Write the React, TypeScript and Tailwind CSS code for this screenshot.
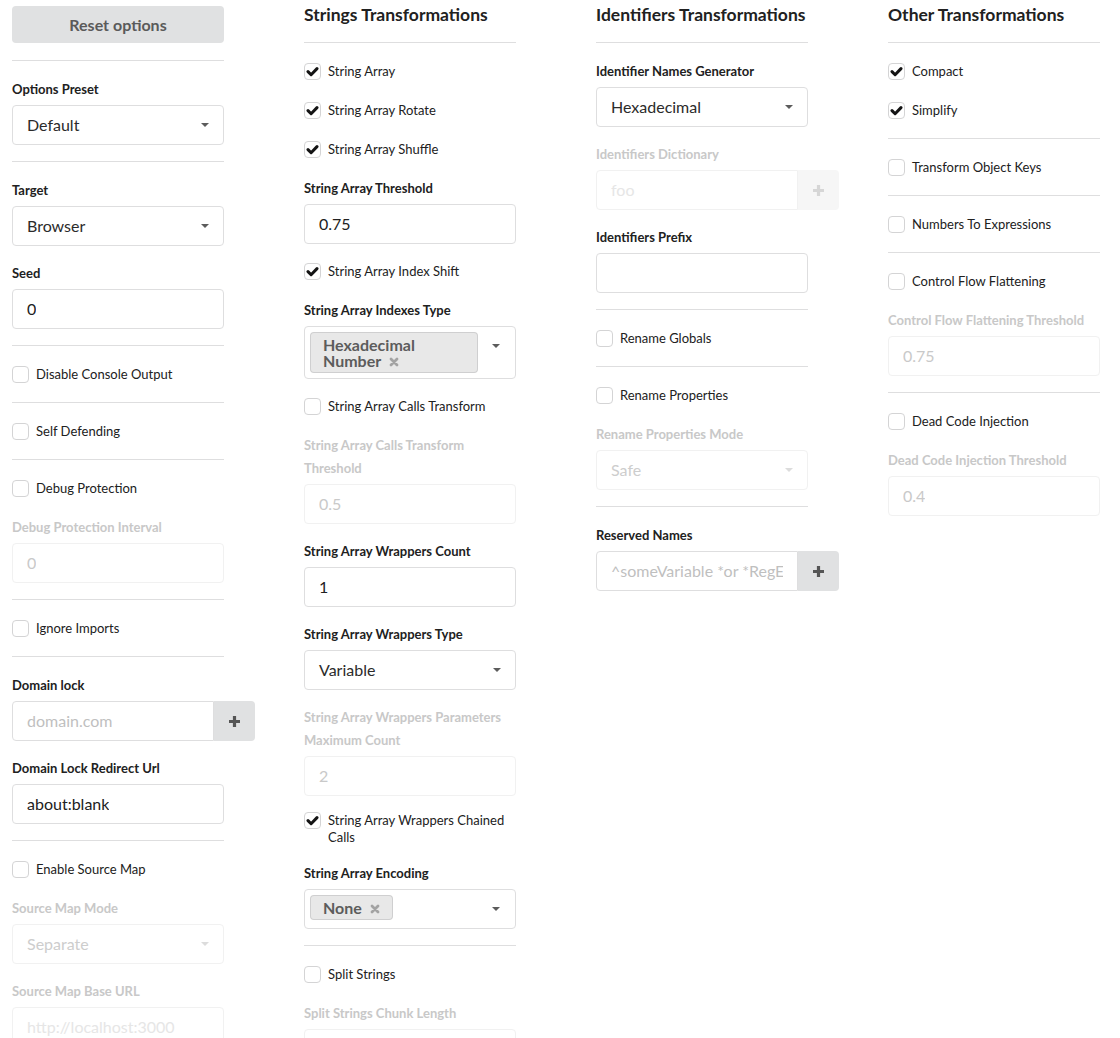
import type { ReactNode } from 'react'

const Check = () => (
  <svg width="13" height="13" viewBox="0 0 13 13">
    <path d="M2 6.6 L5.1 9.7 L11 3.6" fill="none" stroke="#141414" strokeWidth="3" strokeLinecap="round" strokeLinejoin="round" />
  </svg>
)

const Caret = ({ light }: { light?: boolean }) => (
  <svg width="8" height="4" viewBox="0 0 8 4" className="shrink-0">
    <path d="M0 0 H8 L4 4 Z" fill={light ? '#dcdcdc' : '#5c5c5c'} />
  </svg>
)

const Plus = ({ light }: { light?: boolean }) => (
  <svg width="13" height="13" viewBox="0 0 13 13">
    <path d="M6.5 1 V12 M1 6.5 H12" stroke={light ? '#d6d6d6' : '#555'} strokeWidth="3.2" />
  </svg>
)

const Cross = () => (
  <svg width="10" height="10" viewBox="0 0 10 10" className="ml-[8px] inline-block align-[0px]">
    <path d="M2 2 L8 8 M8 2 L2 8" stroke="#a3a3a3" strokeWidth="2.8" strokeLinecap="round" />
  </svg>
)

function Divider() {
  return <div className="h-px bg-[#dededf]" />
}

function Section({ children }: { children: ReactNode }) {
  return <div className="flex flex-col gap-[16px] pt-[17px] pb-[16px]">{children}</div>
}

function Header({ children }: { children: ReactNode }) {
  return <h3 className="mb-[12px] text-[17.5px] leading-[30px] font-bold text-[#212121]">{children}</h3>
}

function Field({ label, disabled, children }: { label: string; disabled?: boolean; children: ReactNode }) {
  return (
    <div>
      <div className={`mb-[4px] text-[13px] leading-[23px] font-bold ${disabled ? 'text-[#c8c8c8]' : 'text-[#212121]'}`}>
        {label}
      </div>
      {children}
    </div>
  )
}

function Checkbox({ label, checked, multiline }: { label: string; checked?: boolean; multiline?: boolean }) {
  return (
    <div className={`flex items-start text-[13px] leading-[17px] text-[#212121] ${multiline ? '' : 'py-[3px]'}`}>
      <span className="flex h-[17px] w-[17px] shrink-0 items-center justify-center rounded-[4px] border border-[#d4d4d5] bg-white">
        {checked && <Check />}
      </span>
      <span className="ml-[7px]">{label}</span>
    </div>
  )
}

function Input({ value, placeholder, disabled }: { value?: string; placeholder?: string; disabled?: boolean }) {
  const color = value
    ? disabled ? 'text-[#c9c9c9]' : 'text-[#212121]'
    : disabled ? 'text-[#e6e6e6]' : 'text-[#bfbfbf]'
  return (
    <div
      className={`flex h-[40px] items-center rounded-[4px] border px-[14px] text-[16px] ${
        disabled ? 'border-[#f1f1f1]' : 'border-[#dededf]'
      } ${color}`}
    >
      <span className="block overflow-hidden whitespace-nowrap">{value ?? placeholder}</span>
    </div>
  )
}

function Select({ value, disabled }: { value: string; disabled?: boolean }) {
  return (
    <div
      className={`flex h-[40px] items-center justify-between rounded-[4px] border pr-[14px] pl-[14px] text-[16px] ${
        disabled ? 'border-[#f1f1f1] text-[#cdcdcd]' : 'border-[#dededf] text-[#2b2b2b]'
      }`}
    >
      <span>{value}</span>
      <Caret light={disabled} />
    </div>
  )
}

function MultiSelect({ value }: { value: string }) {
  return (
    <div className="flex min-h-[40px] items-start rounded-[4px] border border-[#dededf] py-[5px] pr-[15px] pl-[5px]">
      <div className="mr-[14px] flex-1">
        <span className="inline-block rounded-[4px] bg-[#e8e8e8] px-[13px] py-[4.5px] text-[16px] leading-[16px] font-bold text-[#5c5c5c] shadow-[inset_0_0_0_1px_rgba(34,36,38,0.12)]">
          {value}
          <Cross />
        </span>
      </div>
      <div className="mt-[12px]">
        <Caret />
      </div>
    </div>
  )
}

function ActionInput({ placeholder, disabled }: { placeholder: string; disabled?: boolean }) {
  return (
    <div className="flex h-[40px] w-[243px]">
      <div
        className={`flex min-w-0 flex-1 items-center rounded-l-[4px] border px-[14px] text-[16px] ${
          disabled ? 'border-[#f1f1f1] text-[#e6e6e6]' : 'border-[#dededf] text-[#bfbfbf]'
        }`}
      >
        <span className="block overflow-hidden whitespace-nowrap">{placeholder}</span>
      </div>
      <div
        className={`flex w-[41px] shrink-0 items-center justify-center rounded-r-[4px] ${
          disabled ? 'bg-[#f6f6f6]' : 'bg-[#e0e1e2]'
        }`}
      >
        <Plus light={disabled} />
      </div>
    </div>
  )
}

function Column({ children }: { children: ReactNode }) {
  return <div className="flex w-[212px] shrink-0 flex-col">{children}</div>
}

export default function App() {
  return (
    <div className="flex gap-[80px] bg-white pl-[12px] font-['Lato',sans-serif]">
      <Column>
        <button className="mt-[6px] mb-[17px] h-[37px] w-full rounded-[4px] bg-[#e0e1e2] text-[16px] font-bold text-[#5a5a5a]">
          Reset options
        </button>
        <Divider />
        <Section>
          <Field label="Options Preset">
            <Select value="Default" />
          </Field>
        </Section>
        <Divider />
        <Section>
          <Field label="Target">
            <Select value="Browser" />
          </Field>
          <Field label="Seed">
            <Input value="0" />
          </Field>
        </Section>
        <Divider />
        <Section>
          <Checkbox label="Disable Console Output" />
        </Section>
        <Divider />
        <Section>
          <Checkbox label="Self Defending" />
        </Section>
        <Divider />
        <Section>
          <Checkbox label="Debug Protection" />
          <Field label="Debug Protection Interval" disabled>
            <Input value="0" disabled />
          </Field>
        </Section>
        <Divider />
        <Section>
          <Checkbox label="Ignore Imports" />
        </Section>
        <Divider />
        <Section>
          <Field label="Domain lock">
            <ActionInput placeholder="domain.com" />
          </Field>
          <Field label="Domain Lock Redirect Url">
            <Input value="about:blank" />
          </Field>
        </Section>
        <Divider />
        <Section>
          <Checkbox label="Enable Source Map" />
          <Field label="Source Map Mode" disabled>
            <Select value="Separate" disabled />
          </Field>
          <Field label="Source Map Base URL" disabled>
            <Input placeholder="http://localhost:3000" disabled />
          </Field>
        </Section>
      </Column>

      <Column>
        <Header>Strings Transformations</Header>
        <Divider />
        <Section>
          <Checkbox label="String Array" checked />
          <Checkbox label="String Array Rotate" checked />
          <Checkbox label="String Array Shuffle" checked />
          <Field label="String Array Threshold">
            <Input value="0.75" />
          </Field>
          <Checkbox label="String Array Index Shift" checked />
          <Field label="String Array Indexes Type">
            <MultiSelect value="Hexadecimal Number" />
          </Field>
          <Checkbox label="String Array Calls Transform" />
          <Field label="String Array Calls Transform Threshold" disabled>
            <Input value="0.5" disabled />
          </Field>
          <Field label="String Array Wrappers Count">
            <Input value="1" />
          </Field>
          <Field label="String Array Wrappers Type">
            <Select value="Variable" />
          </Field>
          <Field label="String Array Wrappers Parameters Maximum Count" disabled>
            <Input value="2" disabled />
          </Field>
          <Checkbox label="String Array Wrappers Chained Calls" checked multiline />
          <Field label="String Array Encoding">
            <MultiSelect value="None" />
          </Field>
        </Section>
        <Divider />
        <Section>
          <Checkbox label="Split Strings" />
          <Field label="Split Strings Chunk Length" disabled>
            <Input value="10" disabled />
          </Field>
        </Section>
      </Column>

      <Column>
        <Header>Identifiers Transformations</Header>
        <Divider />
        <Section>
          <Field label="Identifier Names Generator">
            <Select value="Hexadecimal" />
          </Field>
          <Field label="Identifiers Dictionary" disabled>
            <ActionInput placeholder="foo" disabled />
          </Field>
          <Field label="Identifiers Prefix">
            <Input value="" />
          </Field>
        </Section>
        <Divider />
        <Section>
          <Checkbox label="Rename Globals" />
        </Section>
        <Divider />
        <Section>
          <Checkbox label="Rename Properties" />
          <Field label="Rename Properties Mode" disabled>
            <Select value="Safe" disabled />
          </Field>
        </Section>
        <Divider />
        <Section>
          <Field label="Reserved Names">
            <ActionInput placeholder="^someVariable *or *RegExp" />
          </Field>
        </Section>
      </Column>

      <Column>
        <Header>Other Transformations</Header>
        <Divider />
        <Section>
          <Checkbox label="Compact" checked />
          <Checkbox label="Simplify" checked />
        </Section>
        <Divider />
        <Section>
          <Checkbox label="Transform Object Keys" />
        </Section>
        <Divider />
        <Section>
          <Checkbox label="Numbers To Expressions" />
        </Section>
        <Divider />
        <Section>
          <Checkbox label="Control Flow Flattening" />
          <Field label="Control Flow Flattening Threshold" disabled>
            <Input value="0.75" disabled />
          </Field>
        </Section>
        <Divider />
        <Section>
          <Checkbox label="Dead Code Injection" />
          <Field label="Dead Code Injection Threshold" disabled>
            <Input value="0.4" disabled />
          </Field>
        </Section>
      </Column>
    </div>
  )
}
